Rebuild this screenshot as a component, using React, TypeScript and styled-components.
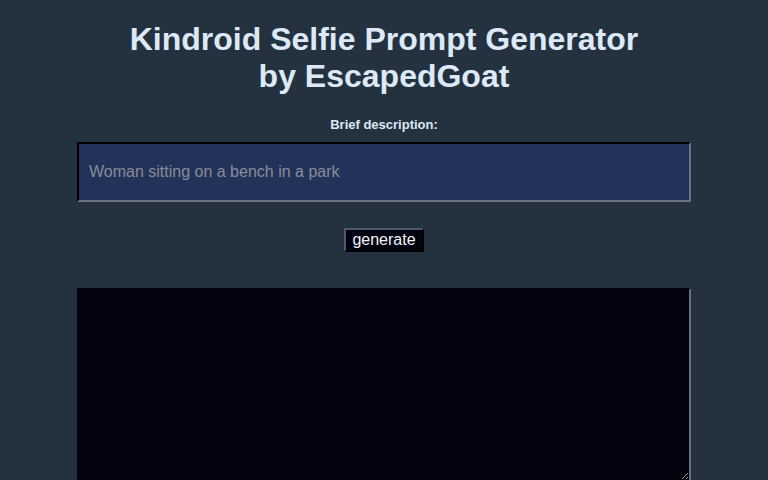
import styled, { createGlobalStyle } from "styled-components";

const GlobalStyle = createGlobalStyle`
  html, body {
    background: #243240;
  }
  body {
    margin: 8px;
    font-family: "Liberation Sans", Arial, sans-serif;
    color: #e6edf5;
  }
`;

const Page = styled.main`
  display: flex;
  flex-direction: column;
  align-items: center;
  padding: 0 69px;
`;

const Title = styled.h1`
  font-size: 32px;
  font-weight: bold;
  line-height: 37px;
  color: #dde9f6;
  text-align: center;
  margin: 13px 0 22px;
`;

const Label = styled.label`
  display: block;
  font-size: 13px;
  font-weight: bold;
  line-height: 15px;
  color: #dce8f4;
  margin-bottom: 10px;
`;

const DescInput = styled.input`
  box-sizing: border-box;
  width: 614px;
  height: 60px;
  padding: 0 10px;
  font-family: "Liberation Sans", Arial, sans-serif;
  font-size: 16px;
  color: #e6edf5;
  background: #23325a;
  border: 2px inset #6b737c;
  border-top-color: #000000;
  border-left-color: #000000;
  outline: none;

  &::placeholder {
    color: #878d98;
  }
`;

const GenerateButton = styled.button`
  margin-top: 26px;
  height: 24px;
  padding: 0 6px;
  font-family: "Liberation Sans", Arial, sans-serif;
  font-size: 16px;
  color: #f2f4f8;
  background: #03030f;
  border: 2px solid #000000;
  border-top-color: #4f5963;
  border-left-color: #4f5963;
  cursor: pointer;
`;

const Output = styled.textarea`
  box-sizing: border-box;
  margin-top: 36px;
  width: 614px;
  height: 194px;
  padding: 8px;
  font-family: "Liberation Mono", monospace;
  font-size: 14px;
  color: #e6edf5;
  background: #03030f;
  border: 2px solid #6b737c;
  border-top-color: #03030f;
  border-left-color: #03030f;
  outline: none;
`;

export default function App() {
  return (
    <>
      <GlobalStyle />
      <Page>
        <Title>
          Kindroid Selfie Prompt Generator
          <br />
          by EscapedGoat
        </Title>
        <Label htmlFor="desc">Brief description:</Label>
        <DescInput id="desc" type="text" placeholder="Woman sitting on a bench in a park" />
        <GenerateButton>generate</GenerateButton>
        <Output readOnly />
      </Page>
    </>
  );
}
